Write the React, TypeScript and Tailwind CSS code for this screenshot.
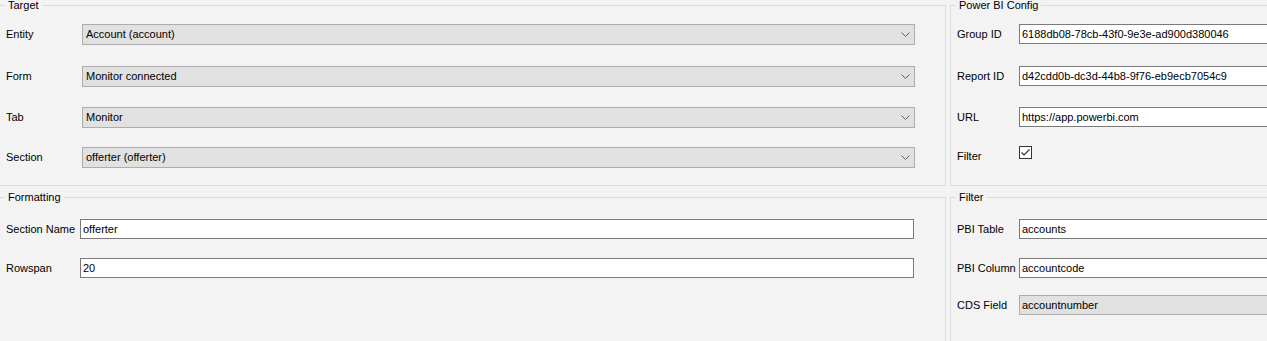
import React from 'react'

function GroupBox({ title, className, children }: { title: string; className?: string; children: React.ReactNode }) {
  return (
    <div className={`relative border border-[#dcdcdc] ${className ?? ''}`}>
      <span className="absolute -top-[7px] left-[5px] px-[3px] bg-[#f3f3f3] leading-[13px]">{title}</span>
      {children}
    </div>
  )
}

function Chevron() {
  return (
    <svg width="9" height="5" viewBox="0 0 9 5" className="ml-auto shrink-0">
      <path d="M0.5 0.5 L4.5 4.5 L8.5 0.5" fill="none" stroke="#606060" strokeWidth="1" />
    </svg>
  )
}

function ComboRow({ label, value, className }: { label: string; value: string; className?: string }) {
  return (
    <div className={`flex items-center h-[21px] ${className ?? ''}`}>
      <div className="w-[76px] shrink-0">{label}</div>
      <div className="flex-1 h-full flex items-center border border-[#adadad] bg-[#e1e1e1] pl-[3px] pr-[4px]">
        <span>{value}</span>
        <Chevron />
      </div>
    </div>
  )
}

function TextRow({
  label,
  value,
  labelWidth,
  disabled,
  className,
}: {
  label: string
  value: string
  labelWidth: string
  disabled?: boolean
  className?: string
}) {
  return (
    <div className={`flex items-center h-[20px] ${className ?? ''}`}>
      <div className={`${labelWidth} shrink-0`}>{label}</div>
      <div
        className={`flex-1 h-full flex items-center pl-[2px] border ${
          disabled ? 'border-[#adadad] bg-[#e1e1e1]' : 'border-[#7a7a7a] bg-white'
        }`}
      >
        {value}
      </div>
    </div>
  )
}

export default function App() {
  return (
    <div className="w-[1267px] h-[341px] overflow-hidden bg-[#f3f3f3] pt-[5px] font-['Liberation_Sans',Arial,sans-serif] text-[11px] text-black">
      <div className="grid grid-cols-[946px_330px] grid-rows-[181px_160px] gap-x-[4px] gap-y-[11px]">
        {/* Target */}
        <GroupBox title="Target" className="border-l-0">
          <div className="flex flex-col pl-[6px] pr-[30px] pt-[18px]">
            <ComboRow label="Entity" value="Account (account)" />
            <ComboRow label="Form" value="Monitor connected" className="mt-[21px]" />
            <ComboRow label="Tab" value="Monitor" className="mt-[20px]" />
            <ComboRow label="Section" value="offerter (offerter)" className="mt-[19px]" />
          </div>
        </GroupBox>

        {/* Power BI Config */}
        <GroupBox title="Power BI Config">
          <div className="flex flex-col pl-[6px] pt-[18px]">
            <TextRow label="Group ID" value="6188db08-78cb-43f0-9e3e-ad900d380046" labelWidth="w-[62px]" />
            <TextRow label="Report ID" value="d42cdd0b-dc3d-44b8-9f76-eb9ecb7054c9" labelWidth="w-[62px]" className="mt-[22px]" />
            <TextRow label="URL" value="https://app.powerbi.com" labelWidth="w-[62px]" className="mt-[21px]" />
            <div className="flex h-[20px] mt-[19px]">
              <div className="w-[62px] shrink-0 pt-[2px]">Filter</div>
              <div className="w-[13px] h-[13px] border border-[#333333] bg-white flex items-center justify-center">
                <svg width="11" height="11" viewBox="0 0 11 11">
                  <path d="M1.5 5.5 L4 8 L9.5 2.5" fill="none" stroke="#333333" strokeWidth="1.2" />
                </svg>
              </div>
            </div>
          </div>
        </GroupBox>

        {/* Formatting */}
        <GroupBox title="Formatting" className="border-l-0">
          <div className="flex flex-col gap-[19px] pl-[6px] pr-[31px] pt-[21px]">
            <TextRow label="Section Name" value="offerter" labelWidth="w-[74px]" />
            <TextRow label="Rowspan" value="20" labelWidth="w-[74px]" />
          </div>
        </GroupBox>

        {/* Filter */}
        <GroupBox title="Filter">
          <div className="flex flex-col pl-[6px] pt-[21px]">
            <TextRow label="PBI Table" value="accounts" labelWidth="w-[62px]" />
            <TextRow label="PBI Column" value="accountcode" labelWidth="w-[62px]" className="mt-[19px]" />
            <TextRow label="CDS Field" value="accountnumber" labelWidth="w-[62px]" disabled className="mt-[17px]" />
          </div>
        </GroupBox>
      </div>
    </div>
  )
}
